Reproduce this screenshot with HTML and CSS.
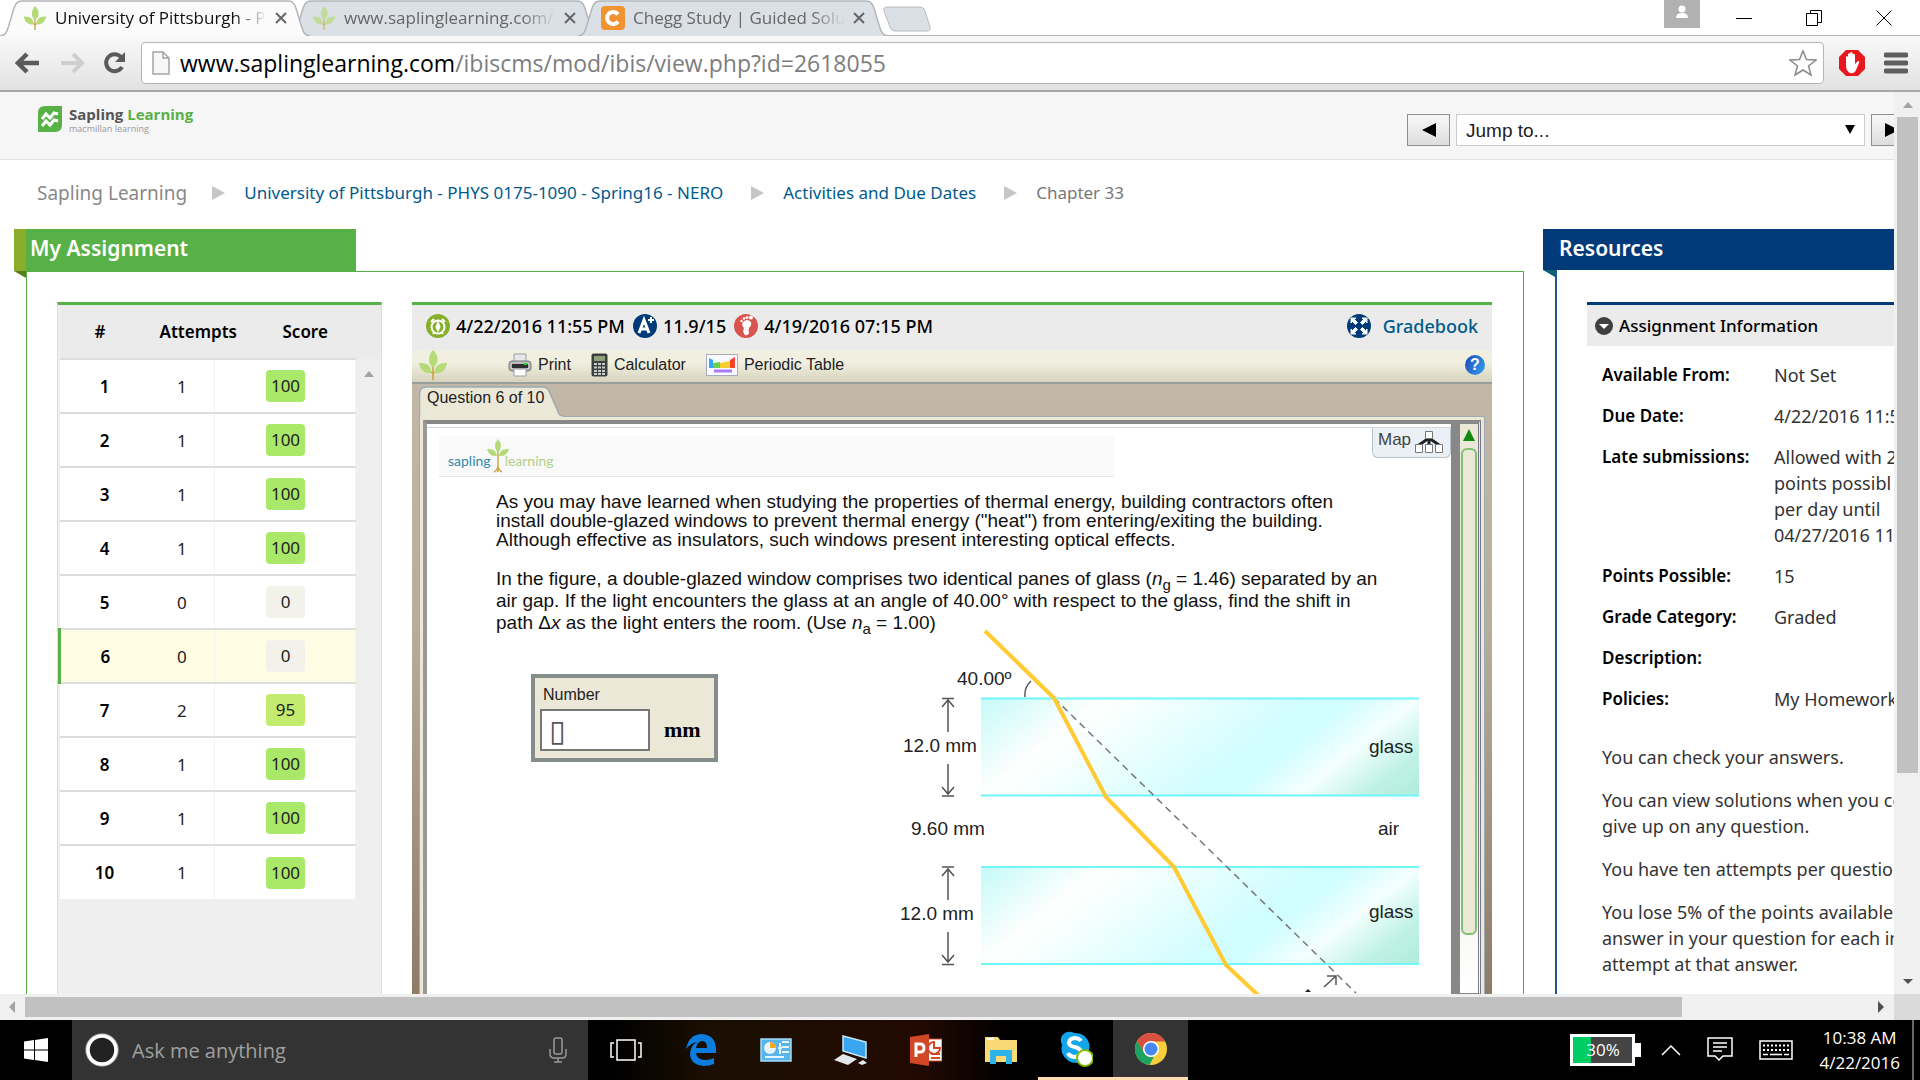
FILE: index.html
```html
<!DOCTYPE html>
<html lang="en">
<head>
<meta charset="utf-8">
<title>University of Pittsburgh - PHYS 0175</title>
<link rel="stylesheet" href="styles.css">
</head>
<body>
<svg class="defs" width="0" height="0" aria-hidden="true">
  <defs>
    <linearGradient id="pane" x1="0" y1="0" x2="1.187" y2=".332">
      <stop offset="0" stop-color="#c4faf8"/><stop offset=".22" stop-color="#fefffe"/><stop offset=".3" stop-color="#f6fffe"/><stop offset=".6" stop-color="#d0fdff"/><stop offset=".66" stop-color="#d0fdff"/><stop offset=".78" stop-color="#f4fffe"/><stop offset=".9" stop-color="#c0f2e5"/><stop offset="1" stop-color="#aeecdb"/>
    </linearGradient>
    <symbol id="leaf" viewBox="0 0 32 34">
      <path d="M16 34V12" stroke="#cfa84a" stroke-width="2" fill="none"/>
      <path d="M16 27C12 22 8 21 3 18M16 27C20 22 24 21 29 18" stroke="#cfa84a" stroke-width="1.5" fill="none"/>
      <path d="M16 0C24 8 22 15 16 20C10 15 10 7 16 0Z" fill="#b5db78"/>
      <path d="M0 15C9 14 14 18 14 26C6 27 2 23 0 15ZM32 15C23 14 18 18 18 26C26 27 30 23 32 15Z" fill="#b5db78"/>
    </symbol>
    <symbol id="tabshape" viewBox="0 0 310 35" preserveAspectRatio="none">
      <path d="M0 35C7 34 7 30 9 24L14 8C16 2 18 1 23 1H287C292 1 294 2 296 8L301 24C303 30 303 34 310 35" stroke="#b3b6ba" stroke-width="1.5"/>
    </symbol>
  </defs>
</svg>

<header class="tabstrip">
  <div class="tab tab-active">
    <svg class="tab-bg"><use href="#tabshape"/></svg>
    <svg class="favicon"><use href="#leaf"/></svg>
    <span class="tab-title">University of Pittsburgh - P</span>
    <button class="tab-close" aria-label="Close tab"><svg width="12" height="12" viewBox="0 0 12 12"><path d="M1 1L11 11M11 1L1 11"/></svg></button>
  </div>
  <div class="tab">
    <svg class="tab-bg"><use href="#tabshape"/></svg>
    <svg class="favicon faded"><use href="#leaf"/></svg>
    <span class="tab-title">www.saplinglearning.com/</span>
    <button class="tab-close" aria-label="Close tab"><svg width="12" height="12" viewBox="0 0 12 12"><path d="M1 1L11 11M11 1L1 11"/></svg></button>
  </div>
  <div class="tab">
    <svg class="tab-bg"><use href="#tabshape"/></svg>
    <svg class="favicon" viewBox="0 0 24 24"><rect width="24" height="24" rx="4" fill="#f19331"/><path d="M17 8.500A6 6 0 1 0 17 15.500" fill="none" stroke="#fff" stroke-width="4"/></svg>
    <span class="tab-title">Chegg Study | Guided Solu</span>
    <button class="tab-close" aria-label="Close tab"><svg width="12" height="12" viewBox="0 0 12 12"><path d="M1 1L11 11M11 1L1 11"/></svg></button>
  </div>
  <button class="new-tab" aria-label="New tab"><svg width="50" height="26" viewBox="0 0 50 26"><path d="M5 1H38Q42 1 43 5L48 21Q49 25 45 25H13Q9 25 8 21L2 5Q1 1 5 1Z" fill="#dbe0e7" stroke="#b9bcc1"/></svg></button>
  <div class="window-buttons">
    <button class="profile" aria-label="Profile"><svg width="36" height="28" viewBox="0 0 36 28"><circle cx="18" cy="9" r="3.500" fill="#fff"/><path d="M12 18Q12 13 18 13Q24 13 24 18Z" fill="#fff"/></svg></button>
    <button aria-label="Minimize"><svg width="16" height="16" viewBox="0 0 16 16"><path d="M0 8.500H16"/></svg></button>
    <button aria-label="Restore"><svg width="16" height="16" viewBox="0 0 16 16"><path d="M.5 3.500H11.500V15.500H.5ZM4.500 3.500V.5H15.500V12.500H12"/></svg></button>
    <button aria-label="Close"><svg width="16" height="16" viewBox="0 0 16 16"><path d="M.5 .5L15.500 15.500M15.500 .5L.5 15.500"/></svg></button>
  </div>
</header>

<nav class="toolbar">
  <button aria-label="Back"><svg width="26" height="22" viewBox="0 0 26 22"><path d="M24 11H4M12 2L3 11L12 20" fill="none" stroke="#5b5b5b" stroke-width="4.500"/></svg></button>
  <button aria-label="Forward"><svg width="26" height="22" viewBox="0 0 26 22"><path d="M2 11H22M14 2L23 11L14 20" fill="none" stroke="#cfcfcf" stroke-width="4"/></svg></button>
  <button aria-label="Reload"><svg width="24" height="22" viewBox="0 0 24 22"><path d="M19 15A8.500 8.500 0 1 1 18 5" fill="none" stroke="#5b5b5b" stroke-width="4"/><path d="M22 0V10H12Z" fill="#5b5b5b"/></svg></button>
  <label class="omnibox">
    <svg width="18" height="24" viewBox="0 0 18 24"><path d="M1 1H11L17 7V23H1ZM11 1V7H17" fill="#f7f7f7" stroke="#a5a5a5" stroke-width="1.500"/></svg>
    <span class="url" role="textbox" aria-label="Address">www.saplinglearning.com<span class="url-path">/ibiscms/mod/ibis/view.php?id=2618055</span></span>
    <svg width="28" height="28" viewBox="0 0 28 28"><path d="M14 2L17.500 10.500L27 11L19.500 17L22 26L14 21L6 26L8.500 17L1 11L10.500 10.500Z" fill="#fff" stroke="#8b8b8b" stroke-width="1.500"/></svg>
  </label>
  <button aria-label="Ad blocker"><svg width="28" height="28" viewBox="0 0 28 28"><path d="M8 1H20L27 8V20L20 27H8L1 20V8Z" fill="#e8191c"/><path d="M8 16V8Q9 6 10 8V13V5Q11 3 12 5V12V4Q13.500 2 14.500 4V12V5Q16 4 17 6V15L20 12Q22 12 21 14L18 21Q16 25 12 24Q8 22 8 16Z" fill="#fff"/></svg></button>
  <button aria-label="Menu"><svg width="24" height="22" viewBox="0 0 24 22"><path d="M2 3H22M2 11H22M2 19H22" stroke="#5f5f5f" stroke-width="5" stroke-linecap="round"/></svg></button>
</nav>

<div class="browser-view">
<main class="page">
  <div class="site-header">
    <a class="brand" href="#">
      <svg width="26" height="28" viewBox="0 0 26 28"><path d="M8 1H25V20Q25 27 18 27H1V8Q1 1 8 1Z" fill="#57b147"/><path d="M5 14L9 9L13 13L17 8L21 9M5 21L9 16L13 20L17 15L21 16" fill="none" stroke="#fff" stroke-width="3"/></svg>
      <span class="brand-text"><strong>Sapling <em>Learning</em></strong><small>macmillan learning</small></span>
    </a>
    <form class="jump">
      <button type="button" aria-label="Previous"><svg width="14" height="14" viewBox="0 0 14 14"><path d="M14 0V14L0 7Z"/></svg></button>
      <span class="select-wrap"><select aria-label="Jump to"><option>Jump to...</option></select></span>
      <span class="jump-next"><button type="button" aria-label="Next"><svg width="14" height="14" viewBox="0 0 14 14"><path d="M0 0V14L14 7Z"/></svg></button></span>
    </form>
  </div>

  <nav class="crumbs">
    <span class="crumb-root">Sapling Learning</span><i></i>
    <a href="#">University of Pittsburgh - PHYS 0175-1090 - Spring16 - NERO</a><i></i>
    <a href="#">Activities and Due Dates</a><i></i>
    <span>Chapter 33</span>
  </nav>

  <div class="columns">
    <section class="assignment">
      <h2>My Assignment</h2>
      <div class="assignment-body">
        <div class="scores">
          <table>
            <colgroup><col class="c1"><col class="c2"><col class="c3"><col class="c4"></colgroup>
            <thead><tr><th class="h1">#</th><th class="h2">Attempts</th><th class="h3">Score</th><th></th></tr></thead>
            <tbody>
              <tr><th>1</th><td>1</td><td class="score"><b>100</b></td><td class="rail" rowspan="10"><i></i></td></tr>
              <tr><th>2</th><td>1</td><td class="score"><b>100</b></td></tr>
              <tr><th>3</th><td>1</td><td class="score"><b>100</b></td></tr>
              <tr><th>4</th><td>1</td><td class="score"><b>100</b></td></tr>
              <tr><th>5</th><td>0</td><td class="score"><b class="zero">0</b></td></tr>
              <tr class="current"><th>6</th><td>0</td><td class="score"><b class="zero">0</b></td></tr>
              <tr><th>7</th><td>2</td><td class="score"><b class="mid">95</b></td></tr>
              <tr><th>8</th><td>1</td><td class="score"><b>100</b></td></tr>
              <tr><th>9</th><td>1</td><td class="score"><b>100</b></td></tr>
              <tr><th>10</th><td>1</td><td class="score"><b>100</b></td></tr>
            </tbody>
          </table>
        </div>

        <div class="question">
          <div class="status">
            <svg width="24" height="24" viewBox="0 0 24 24"><circle cx="12" cy="12" r="12" fill="#86b02c"/><circle cx="12" cy="13" r="6.500" fill="none" stroke="#fff" stroke-width="2"/><path d="M12 9L10.500 13L12 16L13.500 13ZM5 8L8 5M19 8L16 5M7 20L8.500 18M17 20L15.500 18" stroke="#fff" stroke-width="2" fill="#fff"/></svg>
            <span>4/22/2016 11:55 PM</span>
            <svg width="24" height="24" viewBox="0 0 24 24"><circle cx="12" cy="12" r="12" fill="#003a78"/><path d="M6 19L11 6L16 19M8 15H14" stroke="#fff" stroke-width="3" fill="none"/><path d="M18 3V9M15 6H21" stroke="#fff" stroke-width="2"/></svg>
            <span>11.9/15</span>
            <svg width="24" height="24" viewBox="0 0 24 24"><circle cx="12" cy="12" r="12" fill="#d9534f"/><path d="M9 8Q13 4 17 8Q18 11 15 14Q14 16 15 19Q14 22 11 21Q8 18 10 14Q7 11 9 8Z" fill="#fff"/><circle cx="7.500" cy="7" r="1.200" fill="#fff"/><circle cx="10" cy="4.500" r="1.300" fill="#fff"/><circle cx="13" cy="3.500" r="1.500" fill="#fff"/><circle cx="17" cy="3.500" r="2" fill="#fff"/></svg>
            <span>4/19/2016 07:15 PM</span>
            <span class="spacer"></span>
            <svg width="24" height="24" viewBox="0 0 24 24"><circle cx="12" cy="12" r="12" fill="#003a78"/><path d="M4 9V4H9L7.500 5.500L10.500 8.500L8.500 10.500L5.500 7.500ZM20 9V4H15L16.500 5.500L13.500 8.500L15.500 10.500L18.500 7.500ZM4 15V20H9L7.500 18.500L10.500 15.500L8.500 13.500L5.500 16.500ZM20 15V20H15L16.500 18.500L13.500 15.500L15.500 13.500L18.500 16.500Z" fill="#fff" stroke="#fff"/></svg>
            <a href="#">Gradebook</a>
          </div>
          <div class="tools">
            <svg class="tools-leaf"><use href="#leaf"/></svg>
            <button><svg width="24" height="24" viewBox="0 0 24 24"><path d="M6 1H18V10H6Z" fill="#e6e9ec" stroke="#9a9da0"/><rect x="1" y="8" width="22" height="10" rx="3" fill="#b9bcbf" stroke="#77797b"/><rect x="4" y="11" width="16" height="4" fill="#2d2f30"/><rect x="16" y="10" width="3" height="2" fill="#3c3"/><path d="M6 16H18V23H6Z" fill="#fff" stroke="#9a9da0"/></svg>Print</button>
            <button><svg width="17" height="24" viewBox="0 0 17 24"><rect x=".5" y=".5" width="16" height="23" rx="2" fill="#3d3f3f"/><rect x="3" y="3" width="11" height="5" fill="#8da27a"/><path d="M3 11H14M3 14.500H14M3 18H14M3 21H14" stroke="#c9cbcb" stroke-width="2" stroke-dasharray="3 1"/></svg>Calculator</button>
            <button class="periodic"><svg width="32" height="22" viewBox="0 0 32 22"><rect x=".5" y=".5" width="31" height="21" fill="#f8faff" stroke="#aab"/><path d="M3 4L7 6V14H3Z" fill="#33a8f5"/><path d="M7 9L14 8V14H7Z" fill="#66d14c"/><path d="M14 9L24 7V14H14Z" fill="#f6cf2d"/><path d="M24 6L29 3V14H24Z" fill="#f1442c"/><path d="M8 17H26" stroke="#a77cf0" stroke-width="3"/></svg>Periodic Table</button>
            <span class="spacer"></span>
            <button class="help" aria-label="Help">?</button>
          </div>
          <div class="frame">
            <div class="qtab"><svg width="144" height="31" viewBox="0 0 144 31"><path d="M0 31V8Q0 1 7 1H124Q128 1 130 5L140 28Q141 30 144 30V31Z" fill="#ebe8d8"/><path d="M.5 31V8Q1 1 7 1H124Q128 1 130 5L140 28Q141 30 144 30" fill="none" stroke="#9fabb2" stroke-width="1.500"/></svg><span>Question 6 of 10</span></div>
            <div class="sheet">
              <div class="paper">
                <div class="paper-top">
                  <div class="banner">
                    <span class="mini-logo"><span>sapling</span><svg width="22" height="34" viewBox="0 0 22 34"><path d="M11 33V12M7 33Q11 31 11 26Q11 31 15 33" stroke="#cfa84a" stroke-width="1.500" fill="none"/><path d="M11 0Q17 7 11 14Q5 7 11 0ZM0 10Q9 9 10 17Q2 18 0 10ZM22 10Q13 9 12 17Q20 18 22 10Z" fill="#b5db78"/></svg><em>learning</em></span>
                  </div>
                  <button class="map">Map <svg width="30" height="24" viewBox="0 0 30 24"><path d="M5 15L15 8L25 15M15 8V15" stroke="#222" stroke-width="3" fill="none"/><path d="M11.500 1.500H18.500V8.500H11.500ZM1.500 14.500H8.500V22.500H1.500ZM11.500 14.500H18.500V22.500H11.500ZM21.500 14.500H28.500V22.500H21.500Z" fill="#fff" stroke="#777"/></svg></button>
                </div>
                <div class="prompt">
                  <p>As you may have learned when studying the properties of thermal energy, building contractors often<br>install double-glazed windows to prevent thermal energy ("heat") from entering/exiting the building.<br>Although effective as insulators, such windows present interesting optical effects.</p>
                  <p class="loose">In the figure, a double-glazed window comprises two identical panes of glass (<i>n</i><sub>g</sub> = 1.46) separated by an<br>air gap. If the light encounters the glass at an angle of 40.00° with respect to the glass, find the shift in<br>path Δ<i>x</i> as the light enters the room. (Use <i>n</i><sub>a</sub> = 1.00)</p>
                </div>
                <div class="work">
                  <div class="answer">
                    <label for="num">Number</label>
                    <div class="answer-row"><input id="num" type="text" value="&#9647;"><span>mm</span></div>
                  </div>
                  <svg class="figure" width="560" height="357" viewBox="890 636 560 357">
                    <rect x="980" y="699" width="438" height="98" fill="url(#pane)"/>
                    <rect x="980" y="868" width="438" height="97" fill="url(#pane)"/>
                    <path d="M980 699.500H1418M980 796.500H1418M980 868H1418M980 965H1418" stroke="#6ff6fb" stroke-width="2"/>
                    <path d="M1053 699L1355 994" stroke="#777" stroke-width="1.500" stroke-dasharray="7 5"/>
                    <path d="M984 632L1053 699L1105 798L1173 868L1225 966L1258 997" fill="none" stroke="#ffca33" stroke-width="4"/>
                    <path d="M1024 698Q1023 688 1030 682M941 699.500H953M947 733V701M941 708L947 701L953 708M947 765V795M941 788L947 795L953 788M941 797H953M941 868H953M947 901V870M941 877L947 870L953 877M947 933V963M941 956L947 963L953 956M941 965.500H953M1323 988L1335 977M1326 977H1335V986" fill="none" stroke="#555" stroke-width="1.500"/>
                    <path d="M1304 993L1307 990L1310 993Z" fill="#222"/>
                    <text x="956" y="686">40.00º</text><text x="902" y="753">12.0 mm</text><text x="910" y="836">9.60 mm</text><text x="899" y="921">12.0 mm</text>
                    <text x="1368" y="754">glass</text><text x="1377" y="836">air</text><text x="1368" y="919">glass</text>
                  </svg>
                </div>
              </div>
              <div class="qscroll"><svg width="12" height="12" viewBox="0 0 12 12"><path d="M6 0L12 12H0Z" fill="#128a12"/></svg><div></div></div>
            </div>
          </div>
        </div>
      </div>
    </section>

    <section class="resources">
      <h2>Resources</h2>
      <div class="resources-body">
        <h3><svg width="18" height="18" viewBox="0 0 18 18"><circle cx="9" cy="9" r="9" fill="#3f3f3f"/><path d="M4 7H14L9 12Z" fill="#fff"/></svg>Assignment Information</h3>
        <dl>
          <dt>Available From:</dt><dd>Not Set</dd>
          <dt>Due Date:</dt><dd>4/22/2016 11:5</dd>
          <dt>Late submissions:</dt><dd>Allowed with 2<br>points possibl<br>per day until<br>04/27/2016 11</dd>
          <dt>Points Possible:</dt><dd>15</dd>
          <dt>Grade Category:</dt><dd>Graded</dd>
          <dt>Description:</dt><dd></dd>
          <dt>Policies:</dt><dd>My Homework</dd>
        </dl>
        <div class="policy">
          <p>You can check your answers.</p>
          <p>You can view solutions when you co<br>give up on any question.</p>
          <p>You have ten attempts per question</p>
          <p>You lose 5% of the points available<br>answer in your question for each in<br>attempt at that answer.</p>
        </div>
      </div>
    </section>
  </div>
</main>
<div class="vbar"><svg width="10" height="8" viewBox="0 0 10 8"><path d="M5 0L10 6H0Z" fill="#a3a3a3"/></svg><div class="vthumb"></div><svg class="down" width="10" height="8" viewBox="0 0 10 8"><path d="M0 1H10L5 6Z" fill="#505050"/></svg></div>
</div>
<div class="hbar"><svg width="8" height="12" viewBox="0 0 8 12"><path d="M7 0V12L1 6Z" fill="#a3a3a3"/></svg><div class="hthumb"></div><svg width="8" height="12" viewBox="0 0 8 12"><path d="M1 0V12L7 6Z" fill="#505050"/></svg><div class="corner"></div></div>

<footer class="taskbar">
  <button class="start" aria-label="Start"><svg width="24" height="24" viewBox="0 0 24 24"><path d="M0 3.500L10 2V11.500H0ZM11 2L24 0V11.500H11ZM0 12.500H10V22L0 20.500ZM11 12.500H24V24L11 22Z" fill="#fff"/></svg></button>
  <label class="search">
    <svg width="34" height="34" viewBox="0 0 34 34"><circle cx="17" cy="17" r="14.500" fill="none" stroke="#999" stroke-width="4.500"/><circle cx="17" cy="17" r="14" fill="#222" stroke="#fff" stroke-width="3.500"/></svg>
    <input type="text" placeholder="Ask me anything" aria-label="Search">
    <svg width="18" height="26" viewBox="0 0 18 26"><rect x="5" y="1" width="8" height="16" rx="2" fill="none" stroke="#9a9a9a" stroke-width="1.500"/><path d="M1 12V17Q1 21 5 21H13Q17 21 17 17V12M9 21V25M5 25H13" fill="none" stroke="#9a9a9a" stroke-width="1.500"/></svg>
  </label>
  <div class="apps">
    <button aria-label="Task view"><svg width="32" height="22" viewBox="0 0 32 22"><path d="M7 1H25V21H7ZM4 4H1V18H4M28 4H31V18H28" fill="none" stroke="#fff" stroke-width="1.500"/></svg></button>
    <button aria-label="Edge"><svg width="30" height="32" viewBox="0 0 30 32"><path d="M0 15Q3 0 16 0Q30 1 30 16V19H10Q11 26 19 26Q24 26 28 24V30Q23 32 18 32Q4 31 4 19Q5 11 11 8Q5 9 0 15ZM10 14H21Q21 7 16 7Q11 8 10 14Z" fill="#0c7cdd"/></svg></button>
    <button aria-label="Control panel"><svg width="32" height="24" viewBox="0 0 32 24"><rect x="1" y="1" width="30" height="22" fill="#57b5ea" stroke="#a5dcf8" stroke-width="1.500"/><circle cx="10" cy="10" r="6" fill="#e6f5fd"/><path d="M10 10V4A6 6 0 0 1 16 10Z" fill="#f7a823"/><path d="M18 10H22M20 5V16M22 4H29M22 9H29M22 14H29M5 19H24" stroke="#e8f7ff" stroke-width="2"/></svg></button>
    <button aria-label="This PC"><svg width="34" height="32" viewBox="0 0 34 32"><path d="M9 2L32 8V24L9 17Z" fill="#3aa4ee" stroke="#c5e8fb" stroke-width="1.500"/><path d="M0 26L9 20L23 25L14 31Z" fill="#e3e8ec"/><path d="M24 29L29 26L33 29L28 31Z" fill="#e3e8ec"/></svg></button>
    <button aria-label="PowerPoint"><svg width="32" height="32" viewBox="0 0 32 32"><rect x="15" y="5" width="17" height="22" fill="#fff" stroke="#d24726"/><path d="M24 8V14H30A6 6 0 1 1 24 8ZM21 20H30M21 24H30" fill="none" stroke="#d24726" stroke-width="2"/><path d="M0 3L19 0V32L0 29Z" fill="#d24726"/><path d="M6 23V10H10Q14 10 14 14T10 18H6" fill="none" stroke="#fff" stroke-width="3"/></svg></button>
    <button aria-label="File Explorer"><svg width="32" height="28" viewBox="0 0 32 28"><path d="M0 1H13L15 4H32V26H0Z" fill="#f9d976"/><path d="M2 3H9" stroke="#fff" stroke-width="2"/><path d="M5 14H27V28H21V20H11V28H5Z" fill="#2fb4ea"/></svg></button>
    <button class="running" aria-label="Skype"><svg width="34" height="36" viewBox="0 0 34 36"><path d="M8 1Q12 0 15 2Q26 1 30 12Q31 16 30 19Q33 27 28 31Q24 34 20 32Q8 33 3 22Q2 17 3 14Q-1 5 8 1Z" fill="#12a5ea"/><path d="M22 10Q20 7 15 7Q10 8 10 12Q10 15 16 16Q22 18 22 21Q21 26 15 26Q10 25 9 22" fill="none" stroke="#fff" stroke-width="4"/><circle cx="26" cy="27" r="8" fill="#fff" stroke="#7fba00" stroke-width="2"/></svg></button>
    <button class="running focused" aria-label="Chrome"><svg width="34" height="34" viewBox="0 0 34 34"><circle cx="17" cy="17" r="16" fill="#f9cd3c"/><path d="M3 9A16 16 0 0 1 31 9.500H17A8 8 0 0 0 9.500 20Z" fill="#d94f40"/><path d="M3 9L10.500 21A8 8 0 0 0 20 24.500L15.500 33A16 16 0 0 1 3 9Z" fill="#1ea362"/><circle cx="17" cy="17" r="8" fill="#fff"/><circle cx="17" cy="17" r="6.500" fill="#4688f4"/></svg></button>
  </div>
  <div class="tray">
    <span class="battery"><span>30%</span></span>
    <svg width="20" height="12" viewBox="0 0 20 12"><path d="M1 11L10 2L19 11" fill="none" stroke="#fff" stroke-width="1.500"/></svg>
    <svg width="26" height="26" viewBox="0 0 26 26"><path d="M1 1H25V19H16L12 23L8 19H1ZM6 6H20M6 10H20M6 14H15" fill="none" stroke="#fff" stroke-width="1.500"/></svg>
    <svg width="34" height="20" viewBox="0 0 34 20"><path d="M1 1H33V19H1Z" fill="none" stroke="#fff" stroke-width="1.500"/><path d="M4 5.500H30M4 10H30" stroke="#fff" stroke-width="2" stroke-dasharray="2 2"/><path d="M4 14.500H9M11 14.500H23M25 14.500H30" stroke="#fff" stroke-width="1.500"/></svg>
    <div class="clock"><span>10:38 AM</span><span>4/22/2016</span></div>
    <i class="peek"></i>
  </div>
</footer>
</body>
</html>
```
FILE: styles.css
```css
* { box-sizing: border-box; }
body {
  margin: 0; height: 100vh; display: flex; flex-direction: column; overflow: hidden;
  background: #fff; color: #222; font: 17px "Noto Sans", sans-serif;
}
button { border: 0; padding: 0; background: none; font: inherit; color: inherit; }
svg { flex: none; display: block; }
a { color: #005b8c; text-decoration: none; }
.defs { position: absolute; }
.spacer { flex: 1; }

/* Browser tabs */
.tabstrip { display: flex; height: 36px; flex: none; border-bottom: 1px solid #b3b6ba; font: 17px/36px "Open Sans", sans-serif; }
.tab { position: relative; display: flex; align-items: center; width: 310px; height: 36px; margin-right: -21px; padding: 0 23px; gap: 8px; color: #666; z-index: 1; }
.tab-active { color: #111; z-index: 2; }
.tab-bg { position: absolute; left: 0; top: 0; width: 100%; height: 36px; fill: #dbe0e7; z-index: -1; }
.tab-active .tab-bg { fill: #fbfbfb; }
.favicon { width: 24px; height: 24px; }
.faded { opacity: .7; }
.tab-title { flex: 1; overflow: hidden; white-space: nowrap; -webkit-mask-image: linear-gradient(90deg, #000 84%, transparent); mask-image: linear-gradient(90deg, #000 84%, transparent); }
.tab-close { stroke: #666; stroke-width: 2; }
.new-tab { margin: 6px 0 0 15px; height: 26px; }
.window-buttons { display: flex; margin-left: auto; padding-right: 28px; gap: 54px; align-items: center; height: 36px; fill: none; stroke: #000; }
.window-buttons .profile { align-self: flex-start; background: #b1b1b1; stroke: none; height: 28px; margin-right: -18px; }

.toolbar { display: flex; align-items: center; flex: none; height: 56px; padding: 0 12px 0 15px; gap: 18px; background: linear-gradient(#f9f9f9, #e2e2e2); border-bottom: 2px solid #a9a9a9; }
.omnibox { flex: 1; display: flex; align-items: center; gap: 10px; height: 42px; margin: 0 -4px 0 -4px; padding: 0 6px 0 10px; background: #fff; border: 1px solid #b5b5b5; border-radius: 4px; }
.url { flex: 1; font: 23px "Open Sans", sans-serif; color: #000; white-space: nowrap; }
.url-path { color: #7d7d7d; }

/* Page viewport and scroll bars */
.browser-view { flex: 1; min-height: 0; display: flex; }
.page { flex: 1; min-width: 0; overflow: hidden; display: flex; flex-direction: column; }
.vbar { width: 26px; flex: none; display: flex; flex-direction: column; align-items: center; background: #f0f0f0; padding: 10px 2px 8px 3px; gap: 7px; }
.vthumb { width: 100%; height: 656px; background: #c1c1c1; }
.down { margin-top: auto; }
.hbar { flex: none; display: flex; align-items: center; height: 26px; gap: 9px; padding-left: 8px; background: #f0f0f0; }
.hthumb { width: 100%; max-width: 1657px; height: 20px; margin-right: auto; background: #c1c1c1; }
.corner { width: 26px; height: 26px; flex: none; background: #dadada; }

.site-header { display: flex; justify-content: space-between; flex: none; height: 68px; padding: 13px 0 0 37px; background: #f6f6f6; border-bottom: 1px solid #e3e3e3; }
.brand { display: flex; gap: 6px; color: #555; }
.brand-text { display: flex; flex-direction: column; font-family: "Open Sans", sans-serif; }
.brand strong { font-size: 15px; line-height: 18px; }
.brand em { font-style: normal; color: #57b147; }
.brand small { font-size: 9px; line-height: 12px; color: #999; }
.jump { display: flex; gap: 6px; padding-top: 9px; font: 19px "Liberation Sans", sans-serif; }
.jump button { display: grid; place-items: center; width: 43px; height: 32px; flex: none; background: linear-gradient(#f8f8f8, #ddd); border: 1px solid #8f8f8f; }
.jump-next { width: 23px; display: flex; overflow: hidden; }
.jump-next button { place-items: center start; padding-left: 13px; }
.select-wrap { position: relative; width: 409px; }
.select-wrap::after { content: ""; position: absolute; right: 10px; top: 11px; border: 5px solid transparent; border-top: 9px solid #000; border-bottom: 0; }
select { appearance: none; width: 100%; height: 32px; padding: 0 9px; background: #fff; border: 1px solid #ccc; border-radius: 0; font: inherit; color: #222; }

.crumbs { display: flex; align-items: center; flex: none; height: 69px; padding: 0 37px 4px; color: #777; font-size: 17px; white-space: nowrap; }
.crumb-root { font-size: 19px; color: #888; }
.crumbs i { margin: 0 19px 0 28px; border: 7px solid transparent; border-left: 13px solid #c6c6c6; border-right: 0; }
.crumbs .crumb-root + i { margin-left: 25px; }

/* Two main columns */
.columns { flex: 1; min-height: 0; display: flex; gap: 19px; padding-left: 14px; }
h2 { position: relative; margin: 0; height: 42px; font-size: 21px; line-height: 38px; font-weight: 600; color: #fff; }
h2::after { content: ""; position: absolute; left: 0; top: 100%; border-top: 7px solid #557d1c; border-left: 12px solid transparent; }
.assignment, .resources { display: flex; flex-direction: column; min-height: 0; }
.assignment { flex: 1; min-width: 0; }
.assignment h2 { width: 342px; padding-left: 4px; background: #57b147; border-left: 12px solid #8bad2c; }
.assignment h2::after { left: -12px; }
.assignment-body { flex: 1; min-height: 0; display: flex; gap: 30px; margin-left: 12px; padding: 30px 31px 0 30px; border: 1px solid #57b147; border-width: 1px 1px 0 1px; }
.resources { width: 351px; overflow: hidden; }
.resources h2 { padding-left: 16px; background: #003a78; }
.resources h2::after { border-top-color: #0b6272; }

.scores { width: 325px; flex: none; background: #efefef; border: 1px solid #ddd; border-width: 0 1px; border-top: 3px solid #57b147; }
.scores table { width: 100%; table-layout: fixed; border-collapse: collapse; font-size: 17px; }
.scores th { font-weight: 600; color: #000; }
.c1 { width: 82px; }
.c2 { width: 73px; }
.c3 { width: 141px; }
.scores thead th { height: 54px; padding: 0; background: #ebebeb; white-space: nowrap; text-align: left; }
.scores thead .h1 { padding-left: 35px; }
.scores thead .h2 { padding-left: 18px; }
.scores thead .h3 { padding-left: 68px; }
.scores tbody tr { background: #fff; }
.scores tbody th, .scores tbody td { height: 54px; padding: 0; border-top: 2px solid #ddd; }
.scores tbody th { padding-left: 8px; }
.scores tbody td { text-align: center; border-right: 1px solid #f3f3f3; }
.scores tbody td:nth-child(2) { padding-left: 8px; }
.scores tbody .score { padding-left: 51px; text-align: left; }
.score b { display: block; width: 39px; height: 32px; border-radius: 4px; background: #a9e868; font-weight: 400; line-height: 32px; text-align: center; }
.score .zero { background: #f2f2ea; }
.score .mid { background: #c3ec6e; }
.scores tbody .rail { background: #efefef; vertical-align: top; border: 0; padding-top: 12px; }
.rail i { display: block; width: 10px; margin: 0 auto; border: 5px solid transparent; border-bottom: 6px solid #a3a3a3; border-top: 0; }
.scores .current { background: #fffee4; }
.current th { border-left: 3px solid #57b147; }

/* Question player */
.question { flex: 1; min-width: 0; display: flex; flex-direction: column; border-top: 3px solid #57b147; font-family: "Liberation Sans", sans-serif; }
.status { display: flex; align-items: center; flex: none; height: 45px; padding: 0 14px 4px; gap: 6px; background: #ebebeb; font: 500 18px "Noto Sans", sans-serif; color: #000; }
.status span + svg { margin-left: 2px; }
.status a { margin-left: 6px; }
.tools { display: flex; align-items: center; flex: none; height: 34px; padding: 0 7px 2px 4px; gap: 20px; background: linear-gradient(#f1efdf 40%, #d6d3bd); border-bottom: 2px solid #9a9f9d; font-size: 17px; }
.tools button { display: flex; align-items: center; gap: 6px; font-size: 16px; }
.tools-leaf { width: 34px; height: 30px; margin-right: 38px; }
.tools .help { display: grid; place-items: center; width: 20px; height: 20px; border-radius: 10px; background: linear-gradient(120deg, #1c46b8, #37a4ee); color: #fff; font-weight: 700; }
.frame { flex: 1; min-height: 0; display: flex; flex-direction: column; padding: 2px 7px 0; background: linear-gradient(#c3b8a8, #b8ad9c 40%, #8d7c66); }
.qtab { position: relative; height: 30px; flex: none; padding: 3px 8px; font-size: 16px; color: #222; z-index: 1; }
.qtab svg { position: absolute; left: 0; top: 0; z-index: -1; }
.sheet { flex: 1; min-height: 0; display: flex; padding: 3px 3px 0; background: #ebe8d8; border: 1px solid #9fabb2; border-bottom: 0; }
.paper { flex: 1; min-width: 0; overflow: hidden; background: #fff; border: 4px solid #888; border-width: 4px 8px 0 4px; border-color: #888 #888 #888 #999; padding-top: 3px; }
.paper-top { display: flex; justify-content: space-between; align-items: flex-start; border-top: 1px solid #ccd4d6; padding-left: 12px; }
.banner { width: 675px; height: 41px; margin-top: 8px; padding: 3px 9px; background: #f9f9f9; border-bottom: 1px solid #e6e6e6; }
.mini-logo { display: flex; font: 14px/44px "Lato", sans-serif; color: #2f8aa9; height: 34px; }
.mini-logo svg { margin: 0 -4px; }
.mini-logo em { font-style: normal; color: #b5cf85; }
.map { display: flex; gap: 3px; height: 30px; width: 79px; padding: 2px 5px 0; background: #eaf0f6; border: 1px solid #b9c3ca; border-top: 0; border-radius: 0 0 6px 6px; font-size: 17px; color: #444; white-space: nowrap; }
.prompt { padding-left: 69px; font-size: 19px; color: #111; white-space: nowrap; }
.prompt p { margin: 15px 0 0; line-height: 19px; }
.prompt .loose { margin-top: 19px; line-height: 22px; }
.prompt sub { font-size: 15px; line-height: 0; }
.work { display: flex; justify-content: space-between; align-items: flex-start; margin-top: 1px; padding-left: 104px; }
.answer { width: 187px; height: 88px; margin-top: 39px; padding: 7px 5px; background: #ebe8d8; border: 4px solid #858d8a; font-size: 16px; }
.answer label { display: block; padding-left: 3px; line-height: 20px; }
.answer-row { display: flex; align-items: center; gap: 14px; margin-top: 4px; }
.answer-row input { width: 110px; height: 42px; padding: 0 7px; border: 2px solid #777; background: #fff; font: 30px "DejaVu Sans", sans-serif; color: #555; }
.answer-row span { font: bold 22px "Liberation Serif", serif; color: #000; }
.figure { overflow: visible; font-size: 19px; fill: #222; }
.qscroll { width: 22px; flex: none; display: flex; flex-direction: column; align-items: center; gap: 7px; padding-top: 5px; background: linear-gradient(#ebe8d8 60%, #fff); border: 1px solid #888; border-top: 4px solid #888; border-right: 3px double #778; }
.qscroll div { width: 16px; height: 487px; background: #ebe8d8; border: 2px solid #7fc172; border-radius: 6px; }

/* Resources */
.resources-body { flex: 1; margin-left: 12px; padding: 32px 0 0 30px; border-left: 2px solid #24548a; white-space: nowrap; color: #333; }
h3 { display: flex; align-items: center; gap: 6px; height: 44px; margin: 0; padding-left: 8px; background: #ebebeb; border-top: 3px solid #003a78; font-size: 17px; font-weight: 500; color: #000; }
dl { display: grid; grid-template-columns: 172px 1fr; row-gap: 15px; margin: 16px 0 0 15px; line-height: 26px; }
dt { font-weight: 600; color: #000; }
dd { margin: 0; min-height: 26px; }
dd, .policy { font-size: 18px; }
.policy { margin: 32px 0 0 15px; line-height: 26px; }
.policy p { margin: 0 0 17px; }

/* Taskbar */
.taskbar { display: flex; flex: none; height: 60px; background: #000; color: #fff; font-family: "Open Sans", sans-serif; }
.start { width: 72px; display: grid; place-items: center; }
.search { display: flex; align-items: center; width: 516px; padding: 0 21px 0 13px; gap: 13px; background: #333; }
.search input { flex: 1; border: 0; padding: 0; background: none; font: 20px "Open Sans", sans-serif; }
.search input::placeholder { color: #a0a0a0; }
.apps { display: flex; background: linear-gradient(90deg, #000 4%, #1b0f02 20%, #220a03 55%, #000 70%); }
.apps button { width: 75px; height: 60px; display: grid; place-items: center; }
.apps .running { border-bottom: 3px solid #fddcb0; }
.apps .focused { background: #333; }
.tray { display: flex; align-items: center; margin-left: auto; gap: 26px; }
.battery { position: relative; display: block; width: 65px; height: 32px; border: 3px solid #fff; background: linear-gradient(90deg, #0c6 30%, #444 30%); font: 17px/26px "Open Sans", sans-serif; text-align: center; }
.battery::after { content: ""; position: absolute; right: -9px; top: 6px; width: 6px; height: 14px; background: #fff; }
.clock { display: flex; flex-direction: column; align-items: center; font-size: 17px; line-height: 25px; }
.peek { width: 2px; height: 60px; margin: 0 6px 0 -14px; background: #666; }
```
